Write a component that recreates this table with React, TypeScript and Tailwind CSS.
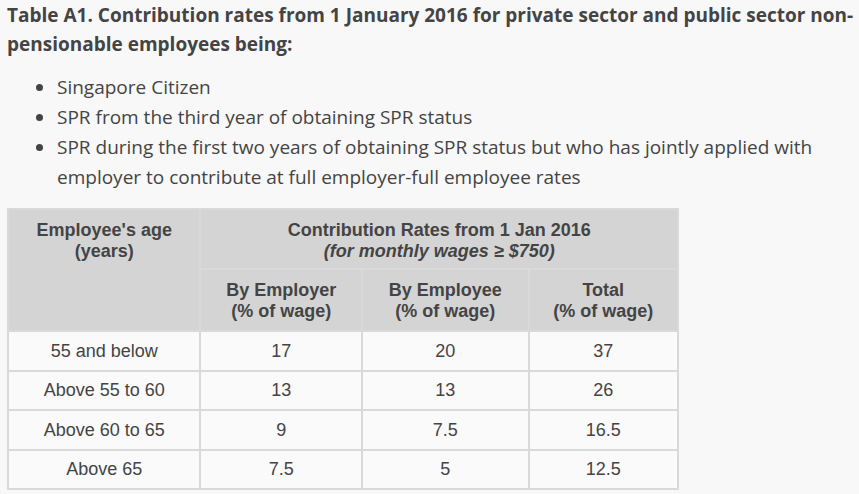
import React from 'react';

const rows = [
  ['55 and below', '17', '20', '37'],
  ['Above 55 to 60', '13', '13', '26'],
  ['Above 60 to 65', '9', '7.5', '16.5'],
  ['Above 65', '7.5', '5', '12.5'],
];

const bullets = [
  'Singapore Citizen',
  'SPR from the third year of obtaining SPR status',
  'SPR during the first two years of obtaining SPR status but who has jointly applied with employer to contribute at full employer-full employee rates',
];

export default function App() {
  return (
    <div className="min-h-[494px] bg-[#f8f8f8] text-[#444] pl-[7px] pt-[1px]">
      <h3 className="font-['Open_Sans',sans-serif] font-bold text-[19px] leading-[29px] w-[852px]">
        Table A1. Contribution rates from 1 January 2016 for private sector and public sector non-pensionable employees being:
      </h3>

      <ul className="mt-[13px] pl-[49px] w-[820px] font-['Open_Sans',sans-serif] text-[19px] leading-[30px] list-disc marker:text-[#444]">
        {bullets.map((b) => (
          <li key={b} className="pl-[1px]">{b}</li>
        ))}
      </ul>

      <table className="mt-[16px] w-[672px] border-collapse border-2 border-[#d9d9d9] font-['Liberation_Sans',Arial,sans-serif] text-[18px] text-center">
        <colgroup>
          <col className="w-[193px]" />
          <col className="w-[162px]" />
          <col className="w-[167px]" />
          <col className="w-[150px]" />
        </colgroup>
        <thead className="bg-[#d4d4d4] font-bold">
          <tr className="h-[60px]">
            <th rowSpan={2} className="border-2 border-[#d9d9d9] align-top pt-[10px] leading-[21px]">
              Employee's age
              <br />
              (years)
            </th>
            <th colSpan={3} className="border-2 border-[#d9d9d9] align-top pt-[10px] leading-[21px]">
              Contribution Rates from 1 Jan 2016
              <br />
              <i>(for monthly wages ≥ $750)</i>
            </th>
          </tr>
          <tr className="h-[62px]">
            <th className="border-2 border-[#d9d9d9] align-top pt-[10px] leading-[21px]">
              By Employer
              <br />
              (% of wage)
            </th>
            <th className="border-2 border-[#d9d9d9] align-top pt-[10px] leading-[21px]">
              By Employee
              <br />
              (% of wage)
            </th>
            <th className="border-2 border-[#d9d9d9] align-top pt-[10px] leading-[21px]">
              Total
              <br />
              (% of wage)
            </th>
          </tr>
        </thead>
        <tbody className="bg-[#fafafa]">
          {rows.map((r) => (
            <tr key={r[0]} className="h-[39.5px]">
              {r.map((c, i) => (
                <td key={i} className="border-2 border-[#d9d9d9] align-middle leading-[20px]">
                  {c}
                </td>
              ))}
            </tr>
          ))}
        </tbody>
      </table>
    </div>
  );
}
